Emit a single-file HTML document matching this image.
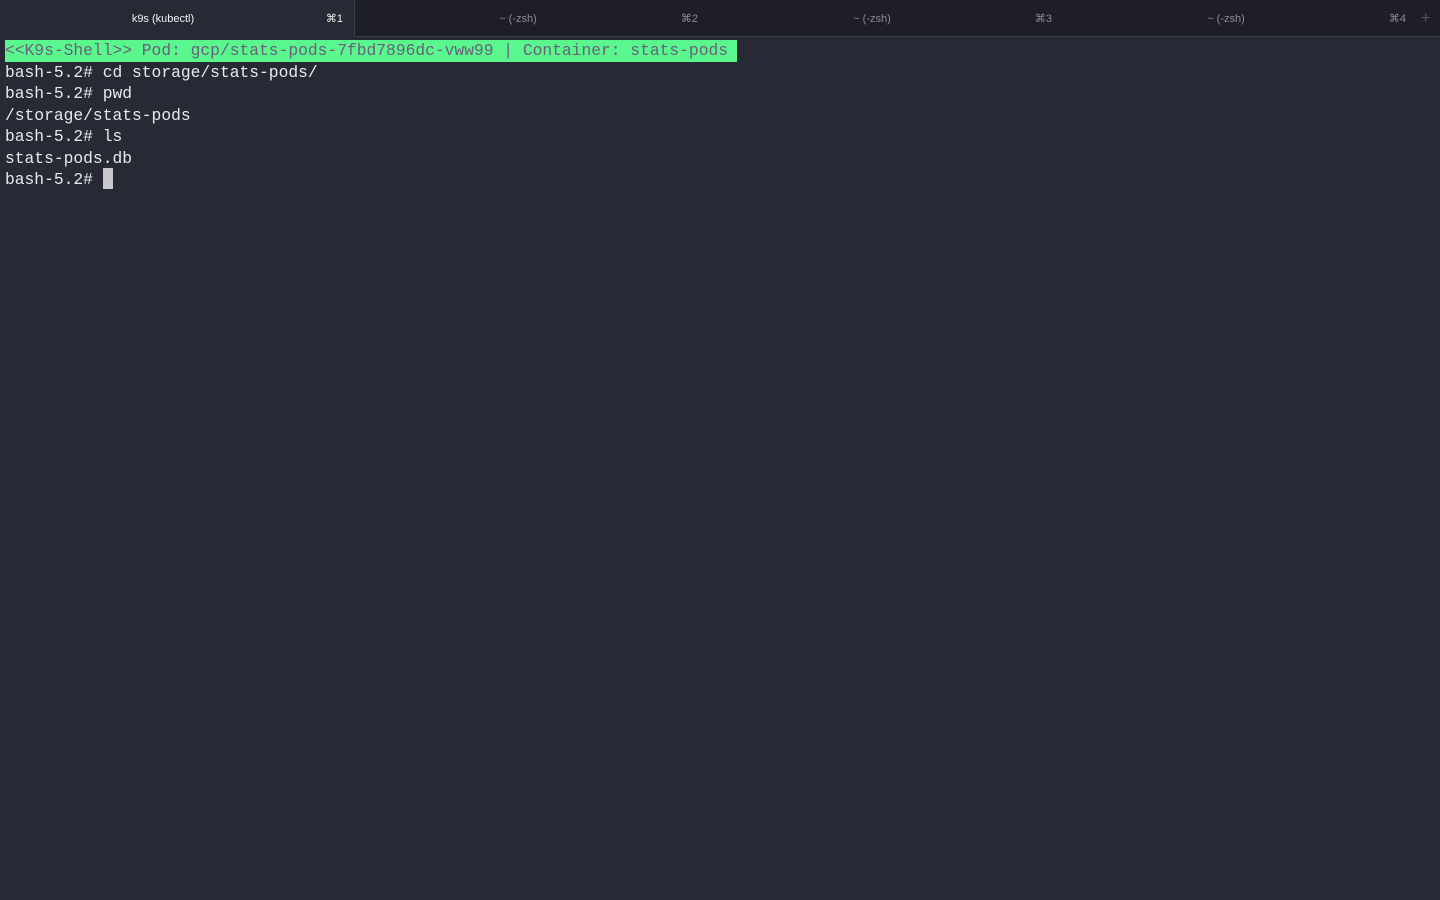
<!DOCTYPE html>
<html><head><style>
html,body{margin:0;padding:0;width:1440px;height:900px;background:#272935;overflow:hidden}
.bar{position:absolute;top:0;left:0;width:1440px;height:36px;background:#1d1e27;border-bottom:1px solid #3a3c48;font-family:"Liberation Sans",sans-serif;font-size:11px;color:#8a8b93}
.tab{position:absolute;top:0;height:36px;line-height:38px}
.tab .t{position:absolute;left:0;right:28px;text-align:center}
.tab .k{position:absolute;right:11px}
.act{background:#272935;color:#f0f0f0;height:37px;border-right:1px solid #3a3c48}
.term{position:absolute;top:40px;left:5px;font-family:"Liberation Mono",monospace;font-size:16.3px;line-height:21.5px;color:#e8e8ea;white-space:pre}
.hl{background:#5af78e;color:#6b5f7c;display:inline-block;padding-right:9px}
.cur{display:inline-block;width:10px;height:21px;background:#c8c8cc;vertical-align:top;margin-top:-1px}
</style></head><body>
<div class="bar">
<div class="tab act" style="left:0;width:354px"><span class="t">k9s (kubectl)</span><span class="k">⌘1</span></div>
<div class="tab" style="left:355px;width:354px"><span class="t">~ (-zsh)</span><span class="k">⌘2</span></div>
<div class="tab" style="left:709px;width:354px"><span class="t">~ (-zsh)</span><span class="k">⌘3</span></div>
<div class="tab" style="left:1063px;width:354px"><span class="t">~ (-zsh)</span><span class="k">⌘4</span></div>
<div style="position:absolute;left:1421px;top:11px;color:#55565e;font-size:16px;line-height:16px">+</div>
</div>
<div class="term"><span class="hl">&lt;&lt;K9s-Shell&gt;&gt; Pod: gcp/stats-pods-7fbd7896dc-vww99 | Container: stats-pods</span>
bash-5.2# cd storage/stats-pods/
bash-5.2# pwd
/storage/stats-pods
bash-5.2# ls
stats-pods.db
bash-5.2# <span class="cur"></span></div>
</body></html>
